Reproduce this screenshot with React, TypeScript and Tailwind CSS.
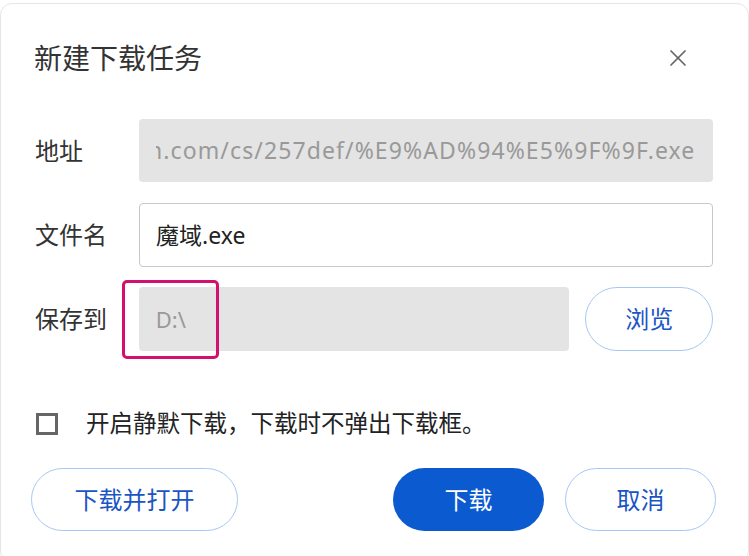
import { X } from 'lucide-react';

const font = { fontFamily: '"Noto Sans", "Noto Sans CJK SC", sans-serif' };

export default function App() {
  // the field is scrolled to its end, so the start of the address is hidden
  const urlTail = 'n.com/cs/257def/%E9%AD%94%E5%9F%9F.exe';

  return (
    <div className="w-[749px] h-[556px] bg-white overflow-hidden pt-[3px]" style={font}>
      <div className="h-[560px] bg-white border border-[#e6e6e6] rounded-[12px] pl-[34px] pr-[35px] pt-[36px]">
        {/* header */}
        <div className="flex items-center justify-between h-[36px]">
          <h1 className="ml-[-1px] text-[28px] leading-[36px] text-[#333]">新建下载任务</h1>
          <button className="mr-[21px] text-[#666]">
            <X className="w-[28px] h-[28px]" strokeWidth={1.5} />
          </button>
        </div>

        {/* form */}
        <div className="mt-[43px] flex flex-col gap-[21px]">
          <div className="flex items-center">
            <span className="w-[104px] text-[24px] text-[#333]">地址</span>
            <div className="flex-1 h-[63px] bg-[#e4e4e4] rounded-[4px] pl-[17px] pr-[17px] flex items-center">
              <div className="flex-1 overflow-hidden">
                <div className="ml-[-8px] whitespace-nowrap text-[23px] tracking-[1.1px] text-[#999]">{urlTail}</div>
              </div>
            </div>
          </div>

          <div className="flex items-center">
            <span className="w-[104px] text-[24px] text-[#333]">文件名</span>
            <div className="flex-1 h-[64px] bg-white border border-[#c8c8c8] rounded-[4px] px-[16px] flex items-center">
              <span className="text-[23px] text-[#222]">魔域.exe</span>
            </div>
          </div>

          <div className="flex items-center mt-[-1px]">
            <span className="w-[104px] text-[24px] text-[#333]">保存到</span>
            <div className="relative w-[432px] h-[64px] bg-[#e4e4e4] rounded-[4px] px-[17px] flex items-center">
              <span className="text-[22px] text-[#999]">D:\</span>
              <div className="absolute left-[-17px] top-[-7px] w-[97px] h-[79px] border-[3px] border-[#d4106e] rounded-[5px]" />
            </div>
            <button className="ml-[16px] w-[128px] h-[64px] rounded-full border border-[#a9c7f5] text-[24px] text-[#1b55c4]">
              浏览
            </button>
          </div>
        </div>

        {/* silent option */}
        <div className="mt-[55px] flex items-center">
          <div className="w-[22px] h-[22px] border-[3px] border-[#666] ml-[1px]" />
          <span className="ml-[28px] text-[23.5px] text-[#222]">开启静默下载，下载时不弹出下载框。</span>
        </div>

        {/* actions */}
        <div className="mt-[27px] flex items-center ml-[-4px] mr-[-3px]">
          <button className="w-[207px] h-[63px] rounded-full border border-[#a9c7f5] text-[24px] text-[#1b55c4]">
            下载并打开
          </button>
          <div className="flex-1" />
          <button className="w-[151px] h-[63px] rounded-full bg-[#0b5ad0] text-[24px] text-white">
            下载
          </button>
          <button className="ml-[21px] w-[151px] h-[63px] rounded-full border border-[#a9c7f5] text-[24px] text-[#1b55c4]">
            取消
          </button>
        </div>
      </div>
    </div>
  );
}
